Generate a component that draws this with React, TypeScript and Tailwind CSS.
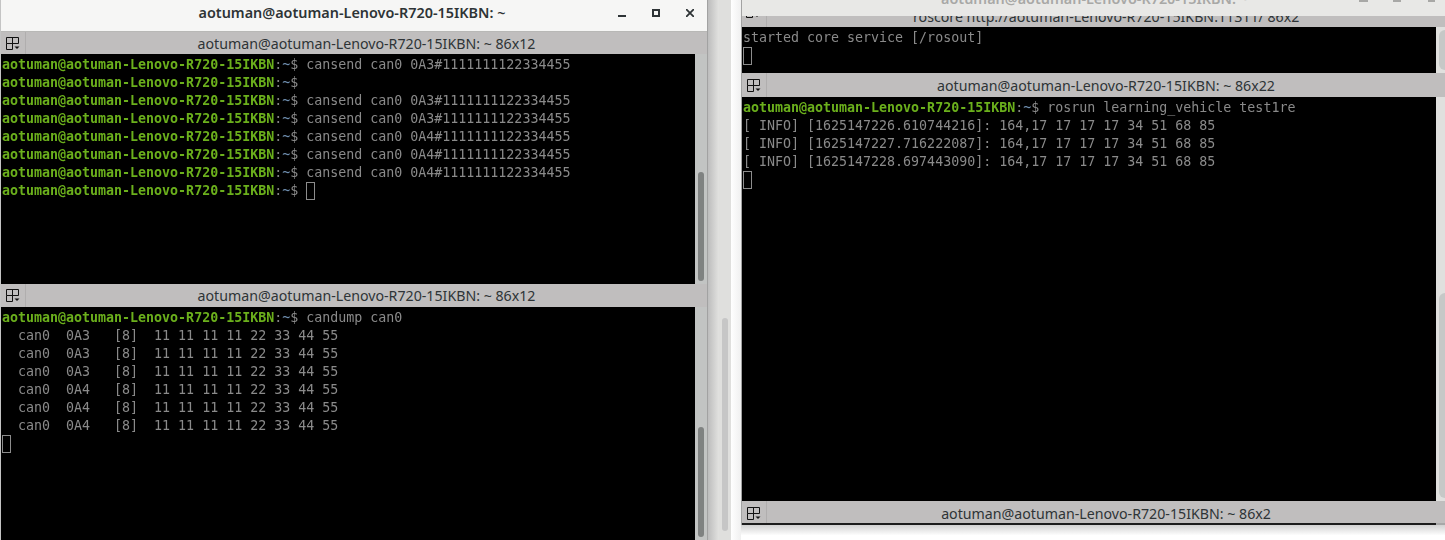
const PROMPT = 'aotuman@aotuman-Lenovo-R720-15IKBN'

const SENT = [
  'cansend can0 0A3#1111111122334455',
  '',
  'cansend can0 0A3#1111111122334455',
  'cansend can0 0A3#1111111122334455',
  'cansend can0 0A4#1111111122334455',
  'cansend can0 0A4#1111111122334455',
  'cansend can0 0A4#1111111122334455',
]

const DUMP = ['0A3', '0A3', '0A3', '0A4', '0A4', '0A4']

const INFO = [
  '[ INFO] [1625147226.610744216]: 164,17 17 17 17 34 51 68 85',
  '[ INFO] [1625147227.716222087]: 164,17 17 17 17 34 51 68 85',
  '[ INFO] [1625147228.697443090]: 164,17 17 17 17 34 51 68 85',
]

function SplitIcon() {
  return (
    <svg width="14" height="14" viewBox="0 0 14 14" fill="none" stroke="#111" strokeWidth="1">
      <path d="M.5 .5H12.5V6.5H.5ZM.5 6.5V12.5H6.5V.5" />
      <path d="M8.5 9.5H13.5L11 12Z" fill="#111" stroke="none" />
    </svg>
  )
}

function PaneHeader({ title, height, textPad = '' }: { title: string; height: string; textPad?: string }) {
  return (
    <div className={`flex shrink-0 ${height} items-center bg-[#c0bebe]`}>
      <div className={`flex h-full w-[25px] shrink-0 items-center justify-center border-r border-[#b0aeae] pr-px ${textPad}`}>
        <SplitIcon />
      </div>
      <div className={`flex-1 text-center text-[14.2px] leading-[22px] text-[#2e3436] ${textPad}`}>
        {title}
      </div>
    </div>
  )
}

function Prompt({ cmd }: { cmd?: string }) {
  return (
    <div className="h-[18px] whitespace-pre">
      <span className="font-bold text-[#6bb01c]">{PROMPT}</span>
      <span className="text-[#858585]">:</span>
      <span className="text-[#6f8fb0]">~</span>
      <span className="text-[#8a8a8a]">$ {cmd}</span>
    </div>
  )
}

function Cursor() {
  return <div className="h-[18px] w-[9px] border border-[#8c8c8c]" />
}

function Scrollbar({ thumb }: { thumb: string }) {
  return (
    <div className="flex w-[12px] shrink-0 flex-col justify-end bg-[#c2c4c3] pb-[3px] pl-[3px]">
      <div className={`w-[6px] rounded-full bg-[#7f8281] ${thumb}`} />
    </div>
  )
}

function Terminal({ children }: { children: React.ReactNode }) {
  return (
    <div className="min-w-0 flex-1 overflow-hidden bg-black pt-[2px] pl-px font-['DejaVu_Sans_Mono',monospace] text-[13.31px] leading-[18px] text-[#8a8a8a]">
      <div className="[will-change:opacity]">{children}</div>
    </div>
  )
}

export default function App() {
  return (
    <div className="flex h-[540px] w-[1445px] overflow-hidden bg-white font-['Noto_Sans',sans-serif]">
      {/* left window */}
      <div className="flex w-[708px] shrink-0 flex-col border-x border-[#a2a2a2] border-l-[#c4c4c4]">
        <div className="flex h-[32px] shrink-0 items-center border-b border-[#b8b8b6] bg-[#f6f6f5] pb-[5px]">
          <div className="flex-1 pl-[146px] text-center text-[14.4px] font-semibold text-[#2e3436]">
            aotuman@aotuman-Lenovo-R720-15IKBN: ~
          </div>
          <div className="flex w-[150px] items-center justify-end gap-[26px] pr-[13px]">
            <div className="mt-[6px] h-[2px] w-[8px] bg-[#2e3436]" />
            <div className="h-[8px] w-[8px] border-2 border-[#2e3436]" />
            <svg width="8" height="8" viewBox="0 0 8 8" stroke="#2e3436" strokeWidth="1.8">
              <path d="M0 0L8 8M8 0L0 8" />
            </svg>
          </div>
        </div>
        <PaneHeader title="aotuman@aotuman-Lenovo-R720-15IKBN: ~ 86x12" height="h-[22px]" textPad="pt-px" />
        <div className="flex h-[230px] shrink-0">
          <Terminal>
            {SENT.map((cmd, i) => (
              <Prompt key={i} cmd={cmd} />
            ))}
            <div className="flex h-[18px] whitespace-pre">
              <Prompt />
              <Cursor />
            </div>
          </Terminal>
          <Scrollbar thumb="h-[109px]" />
        </div>
        <PaneHeader title="aotuman@aotuman-Lenovo-R720-15IKBN: ~ 86x12" height="h-[23px]" />
        <div className="flex min-h-0 flex-1">
          <Terminal>
            <Prompt cmd="candump can0" />
            {DUMP.map((id, i) => (
              <div key={i} className="h-[18px] whitespace-pre">
                {`  can0  ${id}   [8]  11 11 11 11 22 33 44 55`}
              </div>
            ))}
            <Cursor />
          </Terminal>
          <Scrollbar thumb="h-[110px]" />
        </div>
      </div>

      {/* gap between the windows */}
      <div className="h-full w-[11px] shrink-0 bg-gradient-to-r from-[#bdbdbd] to-[#e2e2e0]" />
      <div className="flex h-full w-[12px] shrink-0 flex-col justify-end bg-[#dfdfdd] pb-[9px] pl-[3px]">
        <div className="h-[213px] w-[6px] rounded-full bg-[#c6c6c6]" />
      </div>
      <div className="h-full w-[10px] shrink-0 bg-gradient-to-r from-white to-[#f0f0f0]" />

      {/* right window */}
      <div className="flex min-w-0 flex-1 flex-col">
        <div className="flex h-[525px] shrink-0 flex-col border-l border-[#a2a2a2]">
          <div className="relative h-[16px] shrink-0 overflow-hidden bg-[#e8e8e6]">
            <div className="absolute -top-[12px] left-[199px] text-[14.4px] font-semibold text-[#a8a8a6]">
              aotuman@aotuman-Lenovo-R720-15IKBN: ~
            </div>
            <div className="absolute top-0 left-[617px] h-[2px] w-[9px] bg-[#a8a8a6]" />
            <div className="absolute top-0 left-[651px] h-[2px] w-[8px] bg-[#a8a8a6]" />
            <div className="absolute top-0 left-[686px] h-[2px] w-[7px] bg-[#a8a8a6]" />
          </div>
          <div className="relative h-[11px] shrink-0 overflow-hidden bg-[#c0bebe]">
            <div className="absolute -top-[10px] left-[171px] whitespace-nowrap text-[14.2px] text-[#2e3436]">
              roscore http://aotuman-Lenovo-R720-15IKBN:11311/ 86x2
            </div>
            <div className="absolute -top-[11px] left-[4px]">
              <SplitIcon />
            </div>
            <div className="absolute top-0 left-[24px] h-full border-r border-[#b0aeae]" />
          </div>
          <div className="flex h-[46px] shrink-0">
            <Terminal>
              <div className="h-[18px] whitespace-pre">started core service [/rosout]</div>
              <Cursor />
            </Terminal>
            <div className="flex w-[9px] shrink-0 flex-col bg-[#e0e0de] pl-[3px] pt-[3px]">
              <div className="h-[40px] w-[6px] rounded-l-full bg-[#c6c8c7]" />
            </div>
          </div>
          <PaneHeader title="aotuman@aotuman-Lenovo-R720-15IKBN: ~ 86x22" height="h-[24px]" textPad="pt-px" />
          <div className="flex min-h-0 flex-1">
            <Terminal>
              <Prompt cmd="rosrun learning_vehicle test1re" />
              {INFO.map((line) => (
                <div key={line} className="h-[18px] whitespace-pre">
                  {line}
                </div>
              ))}
              <Cursor />
            </Terminal>
            <div className="flex w-[9px] shrink-0 flex-col justify-end bg-[#e0e0de] pb-[3px] pl-[3px]">
              <div className="h-[205px] w-[6px] rounded-l-full bg-[#c6c8c7]" />
            </div>
          </div>
          <PaneHeader title="aotuman@aotuman-Lenovo-R720-15IKBN: ~ 86x2" height="h-[22px]" textPad="pt-[3px]" />
          <div className="flex h-[2px] shrink-0">
            <div className="flex-1 bg-[#1c1c1c]" />
            <div className="w-[9px] bg-[#a8a8a8]" />
          </div>
        </div>
        <div className="flex-1 bg-gradient-to-b from-[#d2d2d2] to-white to-70%" />
      </div>
    </div>
  )
}
